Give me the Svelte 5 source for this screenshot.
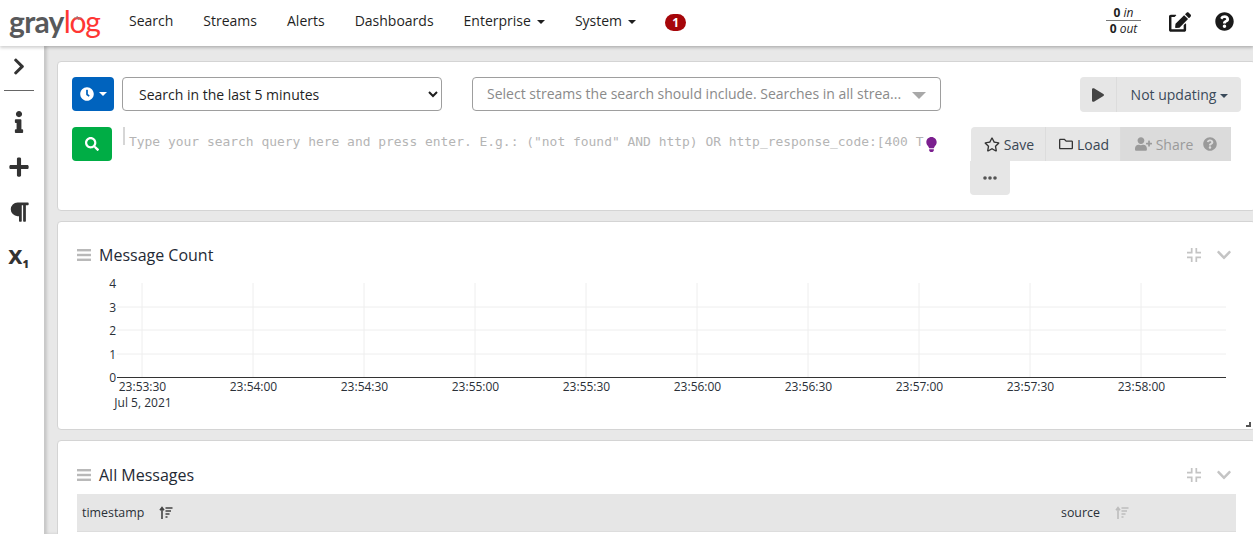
<script>
  const navItems = [
    { label: 'Search' },
    { label: 'Streams' },
    { label: 'Alerts' },
    { label: 'Dashboards' },
    { label: 'Enterprise', caret: true },
    { label: 'System', caret: true },
  ];

  const xTicks = [
    { x: 85, label: '23:53:30' },
    { x: 196, label: '23:54:00' },
    { x: 307, label: '23:54:30' },
    { x: 418, label: '23:55:00' },
    { x: 529, label: '23:55:30' },
    { x: 640, label: '23:56:00' },
    { x: 751, label: '23:56:30' },
    { x: 862, label: '23:57:00' },
    { x: 973, label: '23:57:30' },
    { x: 1084, label: '23:58:00' },
  ];
  const yTicks = [
    { y: 8, label: '4' },
    { y: 32, label: '3' },
    { y: 55, label: '2' },
    { y: 79, label: '1' },
    { y: 102, label: '0' },
  ];

  const placeholder = 'Type your search query here and press enter. E.g.: ("not found" AND http) OR http_response_code:[400 T';
</script>

{#snippet bars()}
  <svg class="bars" viewBox="0 0 14 12" aria-hidden="true">
    <rect x="0" y="0" width="14" height="2.4" />
    <rect x="0" y="4.8" width="14" height="2.4" />
    <rect x="0" y="9.6" width="14" height="2.4" />
  </svg>
{/snippet}

{#snippet widgetTools()}
  <div class="tools">
    <svg class="compress" viewBox="0 0 14 14" aria-hidden="true">
      <path d="M4.7 0v4.7H0M9.3 0v4.7H14M4.7 14V9.3H0M9.3 14V9.3H14" fill="none" stroke="currentColor" stroke-width="1.7" />
    </svg>
    <svg class="collapse" viewBox="0 0 448 512" aria-hidden="true">
      <path d="M207.029 381.476L12.686 187.132c-9.373-9.373-9.373-24.569 0-33.941l22.667-22.667c9.357-9.357 24.522-9.375 33.901-.04L224 284.505l154.745-154.021c9.379-9.335 24.544-9.317 33.901.04l22.667 22.667c9.373 9.373 9.373 24.569 0 33.941L240.971 381.476c-9.373 9.372-24.569 9.372-33.942 0z" />
    </svg>
  </div>
{/snippet}

{#snippet sortIcon(cls)}
  <svg class="sort {cls}" viewBox="0 0 14 14" aria-hidden="true">
    <path d="M3 13V2M1 4.2 3 1.5l2 2.7" fill="none" stroke="currentColor" stroke-width="1.6" />
    <path d="M6.5 2h7M6.5 5h5.5M6.5 8h4M6.5 11h2" fill="none" stroke="currentColor" stroke-width="1.6" />
  </svg>
{/snippet}

<div class="page">
  <nav class="navbar">
    <div class="logo">
      <span class="gray">gray</span><span class="log">l<span class="o">o<svg class="pulse" viewBox="0 0 10 6" aria-hidden="true"><path d="M0 3h3l1-2.5 1.5 5 1-2.5h3" fill="none" stroke="#8a8a8a" stroke-width="0.9" /></svg></span>g</span>
    </div>
    <ul class="nav-links">
      {#each navItems as item}
        <li>{item.label}{#if item.caret}<span class="caret"></span>{/if}</li>
      {/each}
    </ul>
    <span class="badge">1</span>
    <div class="nav-right">
      <div class="throughput">
        <div class="tp-in"><b>0</b> <i>in</i></div>
        <div class="tp-out"><b>0</b> <i>out</i></div>
      </div>
      <svg class="nav-edit" viewBox="0 0 576 512" aria-hidden="true">
        <path d="M402.6 83.2l90.2 90.2c3.8 3.8 3.8 10 0 13.8L274.4 405.6l-92.8 10.3c-12.4 1.4-22.9-9.1-21.5-21.5l10.3-92.8L388.8 83.2c3.8-3.8 10-3.8 13.8 0zm162-22.9l-48.8-48.8c-15.2-15.2-39.9-15.2-55.2 0l-35.4 35.4c-3.8 3.8-3.8 10 0 13.8l90.2 90.2c3.8 3.8 10 3.8 13.8 0l35.4-35.4c15.2-15.3 15.2-40 0-55.2zM384 346.2V448H64V128h73.2c3.2 0 6.2-1.3 8.5-3.5l40-40c7.6-7.6 2.2-20.5-8.5-20.5H48C21.5 64 0 85.5 0 112v352c0 26.5 21.5 48 48 48h352c26.5 0 48-21.5 48-48V306.2c0-10.7-12.9-16-20.5-8.5l-40 40c-2.2 2.3-3.5 5.3-3.5 8.5z" />
      </svg>
      <svg class="nav-help" viewBox="0 0 512 512" aria-hidden="true">
        <path d="M504 256c0 136.997-111.043 248-248 248S8 392.997 8 256C8 119.083 119.043 8 256 8s248 111.083 248 248zM262.655 90c-54.497 0-89.255 22.957-116.549 63.758-3.536 5.286-2.353 12.415 2.715 16.258l34.699 26.31c5.205 3.947 12.621 3.008 16.665-2.122 17.864-22.658 30.113-35.797 57.303-35.797 20.429 0 45.698 13.148 45.698 32.958 0 14.976-12.363 22.667-32.534 33.976C247.128 238.528 216 254.941 216 296v4c0 6.627 5.373 12 12 12h56c6.627 0 12-5.373 12-12v-1.333c0-28.462 83.186-29.647 83.186-106.667 0-58.002-60.165-102-116.531-102zM256 338c-25.365 0-46 20.635-46 46 0 25.364 20.635 46 46 46s46-20.636 46-46c0-25.365-20.635-46-46-46z" />
      </svg>
    </div>
  </nav>

  <div class="body-row">
    <aside class="sidebar">
      <div class="side-item first">
        <svg viewBox="0 0 320 512" class="i-chevron" aria-hidden="true">
          <path d="M285.476 272.971L91.132 467.314c-9.373 9.373-24.569 9.373-33.941 0l-22.667-22.667c-9.357-9.357-9.375-24.522-.04-33.901L188.505 256 34.484 101.255c-9.335-9.379-9.317-24.544.04-33.901l22.667-22.667c9.373-9.373 24.569-9.373 33.941 0L285.475 239.03c9.373 9.372 9.373 24.568.001 33.941z" />
        </svg>
      </div>
      <hr />
      <div class="side-item">
        <svg viewBox="0 0 192 512" class="i-side" aria-hidden="true">
          <path d="M20 424.229h20V279.771H20c-11.046 0-20-8.954-20-20V212c0-11.046 8.954-20 20-20h112c11.046 0 20 8.954 20 20v212.229h20c11.046 0 20 8.954 20 20V492c0 11.046-8.954 20-20 20H20c-11.046 0-20-8.954-20-20v-47.771c0-11.046 8.954-20 20-20zM96 0C56.235 0 24 32.235 24 72s32.235 72 72 72 72-32.235 72-72S135.764 0 96 0z" />
        </svg>
      </div>
      <div class="side-item">
        <svg viewBox="0 0 448 512" class="i-side" aria-hidden="true">
          <path d="M416 208H272V64c0-17.67-14.33-32-32-32h-32c-17.67 0-32 14.33-32 32v144H32c-17.67 0-32 14.33-32 32v32c0 17.67 14.33 32 32 32h144v144c0 17.67 14.33 32 32 32h32c17.67 0 32-14.33 32-32V304h144c17.67 0 32-14.33 32-32v-32c0-17.67-14.33-32-32-32z" />
        </svg>
      </div>
      <div class="side-item">
        <svg viewBox="0 0 448 512" class="i-side" aria-hidden="true">
          <path d="M448 48v32a16 16 0 0 1-16 16h-48v368a16 16 0 0 1-16 16h-32a16 16 0 0 1-16-16V96h-32v368a16 16 0 0 1-16 16h-32a16 16 0 0 1-16-16V352h-32a160 160 0 0 1 0-320h240a16 16 0 0 1 16 16z" />
        </svg>
      </div>
      <div class="side-item subscript">X<span>1</span></div>
    </aside>

    <main class="content">
      <section class="panel search-panel">
        <div class="search-left">
          <div class="row">
            <button class="btn-time">
              <svg viewBox="0 0 512 512" aria-hidden="true">
                <path d="M256,8C119,8,8,119,8,256S119,504,256,504,504,393,504,256,393,8,256,8Zm92.49,313h0l-20,25a16,16,0,0,1-22.49,2.5h0l-67-49.72a40,40,0,0,1-15-31.23V112a16,16,0,0,1,16-16h32a16,16,0,0,1,16,16V256l58,42.5A16,16,0,0,1,348.49,321Z" />
              </svg>
              <span class="caret white"></span>
            </button>
            <select class="time-select">
              <option>Search in the last 5 minutes</option>
            </select>
            <div class="stream-select">
              <span class="stream-text">Select streams the search should include. Searches in all strea...</span>
              <span class="stream-arrow"></span>
            </div>
          </div>
          <div class="row row-query">
            <button class="btn-search">
              <svg viewBox="0 0 512 512" aria-hidden="true">
                <path d="M505 442.7L405.3 343c-4.5-4.5-10.6-7-17-7H372c27.6-35.3 44-79.7 44-128C416 93.1 322.9 0 208 0S0 93.1 0 208s93.1 208 208 208c48.3 0 92.7-16.4 128-44v16.3c0 6.4 2.5 12.5 7 17l99.7 99.7c9.4 9.4 24.6 9.4 33.9 0l28.3-28.3c9.4-9.4 9.4-24.6.1-34zM208 336c-70.7 0-128-57.2-128-128 0-70.7 57.2-128 128-128 70.7 0 128 57.2 128 128 0 70.7-57.2 128-128 128z" />
              </svg>
            </button>
            <div class="editor">
              <span class="gutter"></span>
              <span class="query">{placeholder}</span>
              <svg class="bulb" viewBox="0 0 352 512" aria-hidden="true">
                <path d="M96.06 454.35c.01 6.29 1.87 12.45 5.36 17.69l17.09 25.69a31.99 31.99 0 0 0 26.64 14.28h61.71a31.99 31.99 0 0 0 26.64-14.28l17.09-25.69a31.989 31.989 0 0 0 5.36-17.69l.04-38.35H96.01l.05 38.35zM0 176c0 44.37 16.45 84.85 43.56 115.78 16.52 18.85 42.36 58.23 52.21 91.45.04.26.07.52.11.78h160.24c.04-.26.07-.51.11-.78 9.85-33.22 35.69-72.6 52.21-91.45C335.55 260.85 352 220.37 352 176 352 78.61 272.91-.3 175.45 0 73.44.31 0 82.97 0 176z" />
              </svg>
            </div>
          </div>
        </div>

        <div class="search-right">
          <div class="refresh">
            <button class="btn-play">
              <svg viewBox="0 0 448 512" aria-hidden="true">
                <path d="M424.4 214.7L72.4 6.6C43.8-10.3 0 6.1 0 47.9V464c0 37.5 40.7 60.1 72.4 41.3l352-208c31.4-18.5 31.5-64.1 0-82.6z" />
              </svg>
            </button>
            <button class="btn-interval">Not updating<span class="caret"></span></button>
          </div>
          <div class="actions">
            <div class="action-group">
              <button class="btn-action save">
                <svg viewBox="0 0 576 512" aria-hidden="true">
                  <path d="M528.1 171.5L382 150.2 316.7 17.8c-11.7-23.6-45.6-23.9-57.4 0L194 150.2 47.9 171.5c-26.2 3.8-36.7 36.1-17.7 54.6l105.7 103-25 145.5c-4.5 26.3 23.2 46 46.4 33.7L288 439.6l130.7 68.7c23.2 12.2 50.9-7.4 46.4-33.7l-25-145.5 105.7-103c19-18.5 8.5-50.8-17.7-54.6zM388.6 312.3l23.7 138.4L288 385.4l-124.3 65.3 23.7-138.4-100.6-98 139-20.2 62.2-126 62.2 126 139 20.2-100.6 98z" />
                </svg>
                Save
              </button>
              <button class="btn-action load">
                <svg viewBox="0 0 512 512" aria-hidden="true">
                  <path d="M464 128H272l-54.63-54.63c-6-6-14.14-9.37-22.63-9.37H48C21.49 64 0 85.49 0 112v288c0 26.51 21.49 48 48 48h416c26.51 0 48-21.49 48-48V176c0-26.51-21.49-48-48-48zm0 272H48V112h140.12l54.63 54.63c6 6 14.14 9.37 22.63 9.37H464v224z" />
                </svg>
                Load
              </button>
              <button class="btn-action share">
                <svg class="user" viewBox="0 0 640 512" aria-hidden="true">
                  <path d="M624 208h-64v-64c0-8.8-7.2-16-16-16h-32c-8.8 0-16 7.2-16 16v64h-64c-8.8 0-16 7.2-16 16v32c0 8.8 7.2 16 16 16h64v64c0 8.8 7.2 16 16 16h32c8.8 0 16-7.2 16-16v-64h64c8.8 0 16-7.2 16-16v-32c0-8.8-7.2-16-16-16zm-400 48c70.7 0 128-57.3 128-128S294.7 0 224 0 96 57.3 96 128s57.3 128 128 128zm89.6 32h-16.7c-22.2 10.2-46.9 16-72.9 16s-50.6-5.8-72.9-16h-16.7C60.2 288 0 348.2 0 422.4V464c0 26.5 21.5 48 48 48h352c26.5 0 48-21.5 48-48v-41.6c0-74.2-60.2-134.4-134.4-134.4z" />
                </svg>
                Share
                <svg class="q" viewBox="0 0 512 512" aria-hidden="true">
                  <path d="M504 256c0 136.997-111.043 248-248 248S8 392.997 8 256C8 119.083 119.043 8 256 8s248 111.083 248 248zM262.655 90c-54.497 0-89.255 22.957-116.549 63.758-3.536 5.286-2.353 12.415 2.715 16.258l34.699 26.31c5.205 3.947 12.621 3.008 16.665-2.122 17.864-22.658 30.113-35.797 57.303-35.797 20.429 0 45.698 13.148 45.698 32.958 0 14.976-12.363 22.667-32.534 33.976C247.128 238.528 216 254.941 216 296v4c0 6.627 5.373 12 12 12h56c6.627 0 12-5.373 12-12v-1.333c0-28.462 83.186-29.647 83.186-106.667 0-58.002-60.165-102-116.531-102zM256 338c-25.365 0-46 20.635-46 46 0 25.364 20.635 46 46 46s46-20.636 46-46c0-25.365-20.635-46-46-46z" />
                </svg>
              </button>
            </div>
            <button class="btn-more">
              <svg viewBox="0 0 14 4" aria-hidden="true">
                <circle cx="2" cy="2" r="1.8" /><circle cx="7" cy="2" r="1.8" /><circle cx="12" cy="2" r="1.8" />
              </svg>
            </button>
          </div>
        </div>
      </section>

      <section class="panel widget chart-widget">
        <header class="widget-head">
          {@render bars()}
          <h2>Message Count</h2>
          {@render widgetTools()}
        </header>
        <svg class="chart" width="1199" height="140" viewBox="0 0 1199 140" aria-hidden="true">
          {#each yTicks.slice(1, 4) as t}
            <line x1="60" x2="1169" y1={t.y} y2={t.y} class="grid" />
          {/each}
          {#each xTicks as t}
            <line x1={t.x} x2={t.x} y1="8" y2="102" class="grid" />
            <text x={t.x + 0.5} y="116" text-anchor="middle">{t.label}</text>
          {/each}
          {#each yTicks as t}
            <text x="59" y={t.y + 5} text-anchor="end">{t.label}</text>
          {/each}
          <line x1="60" x2="1169" y1="102.5" y2="102.5" class="axis" />
          <text x="86" y="132" text-anchor="middle">Jul 5, 2021</text>
        </svg>
        <span class="resize"></span>
      </section>

      <section class="panel widget table-widget">
        <header class="widget-head">
          {@render bars()}
          <h2>All Messages</h2>
          {@render widgetTools()}
        </header>
        <div class="table-head">
          <div class="th ts">timestamp {@render sortIcon('dark')}</div>
          <div class="th src">source {@render sortIcon('light')}</div>
        </div>
      </section>
    </main>
  </div>
</div>

<style>
  :global(body) {
    margin: 0;
    overflow: hidden;
    background: #fff;
  }
  .page {
    width: 1253px;
    height: 534px;
    overflow: hidden;
    font-family: 'Open Sans', sans-serif;
    font-size: 14px;
    color: #1f1f1f;
    display: flex;
    flex-direction: column;
  }
  button {
    font-family: inherit;
    font-size: 14px;
    border: 0;
    margin: 0;
    cursor: pointer;
  }

  /* top bar */
  .navbar {
    height: 46px;
    flex: none;
    display: flex;
    align-items: center;
    position: relative;
    z-index: 2;
    background: #fff;
    box-shadow: 0 2px 3px rgba(0, 0, 0, 0.18);
  }
  .logo {
    width: 114px;
    padding-left: 9px;
    box-sizing: border-box;
    font-family: Lato, sans-serif;
    font-size: 30px;
    letter-spacing: -0.7px;
    line-height: 30px;
    margin-top: -5px;
    white-space: nowrap;
  }
  .gray {
    color: #58595b;
    font-weight: 700;
  }
  .log {
    color: #ff3633;
    font-weight: 400;
    letter-spacing: -1.3px;
  }
  .o {
    position: relative;
  }
  .pulse {
    position: absolute;
    left: 5px;
    top: 12px;
    width: 8px;
    height: 6px;
  }
  .nav-links {
    display: flex;
    list-style: none;
    margin: 0;
    padding: 0;
  }
  .nav-links li {
    padding: 0 15px;
    line-height: 20px;
    margin-top: -5px;
  }
  .caret {
    display: inline-block;
    margin-left: 6px;
    vertical-align: middle;
    border-top: 4px solid currentColor;
    border-left: 4px solid transparent;
    border-right: 4px solid transparent;
  }
  .caret.white {
    color: #fff;
    margin-left: 5px;
  }
  .badge {
    margin-left: 14px;
    width: 21px;
    height: 17px;
    border-radius: 9px;
    background: #a6060a;
    color: #fff;
    font-size: 12px;
    font-weight: 700;
    line-height: 17px;
    text-align: center;
    margin-top: -2px;
  }
  .nav-right {
    margin-left: auto;
    display: flex;
    align-items: center;
    padding-right: 19px;
  }
  .throughput {
    width: 35px;
    font-size: 12px;
    line-height: 15px;
    text-align: center;
    margin-right: 28px;
    margin-top: -5px;
  }
  .tp-in {
    border-bottom: 1px solid #777;
  }
  .nav-edit {
    width: 22px;
    height: 20px;
    margin-right: 24px;
    margin-top: -3px;
  }
  .nav-help {
    width: 19px;
    height: 19px;
    margin-top: -3px;
  }
  .nav-edit path,
  .nav-help path {
    fill: #1a1a1a;
  }

  /* left rail */
  .body-row {
    flex: 1;
    display: flex;
    min-height: 0;
  }
  .sidebar {
    width: 44px;
    flex: none;
    padding-top: 9px;
    box-sizing: border-box;
  }
  .sidebar hr {
    width: 30px;
    margin: 13px 0 8px 4px;
    border: 0;
    border-top: 1px solid #666;
  }
  .side-item {
    width: 37px;
    height: 45px;
    display: flex;
    align-items: center;
    justify-content: center;
    color: #333;
  }
  .side-item.first {
    height: 22px;
  }
  .side-item svg {
    fill: #333;
  }
  .i-chevron {
    width: 12px;
    height: 19px;
  }
  .i-side {
    height: 22px;
    width: 20px;
  }
  .subscript {
    font-family: 'DejaVu Sans', sans-serif;
    font-size: 19px;
    font-weight: 700;
    line-height: 20px;
    padding-right: 1px;
  }
  .subscript span {
    font-family: 'Open Sans', sans-serif;
    font-size: 11px;
    font-weight: 800;
    line-height: 10px;
    align-self: flex-end;
    margin-bottom: 10px;
  }

  /* content column */
  .content {
    flex: 1;
    min-width: 0;
    padding: 15px 0 0 13px;
    background: #e8e8e8;
    box-shadow: inset 3px 0 3px rgba(0, 0, 0, 0.14);
    display: flex;
    flex-direction: column;
    gap: 10px;
  }
  .panel {
    width: 1199px;
    flex: none;
    box-sizing: border-box;
    background: #fff;
    border: 1px solid #d4d4d4;
    border-radius: 4px;
    position: relative;
  }

  /* search box */
  .search-panel {
    height: 150px;
    padding: 15px 14px 0 14px;
    display: flex;
    justify-content: space-between;
  }
  .row {
    display: flex;
    align-items: flex-start;
  }
  .row-query {
    margin-top: 16px;
  }
  .btn-time {
    width: 42px;
    height: 34px;
    background: #0063be;
    border-radius: 4px;
    margin-right: 8px;
    display: flex;
    align-items: center;
    justify-content: center;
    padding: 0;
  }
  .btn-time svg {
    width: 14px;
    height: 14px;
    fill: #fff;
  }
  .time-select {
    width: 320px;
    height: 34px;
    margin: 0 30px 0 0;
    padding: 0 12px;
    background: #fff;
    border: 1px solid #9e9e9e;
    border-radius: 4px;
    font-family: inherit;
    font-size: 14px;
    color: #1f1f1f;
  }
  .stream-select {
    width: 469px;
    height: 34px;
    box-sizing: border-box;
    border: 1px solid #9e9e9e;
    border-radius: 4px;
    display: flex;
    align-items: center;
    justify-content: space-between;
    padding: 0 14px;
    color: #8a8a8a;
  }
  .stream-text {
    margin-top: -2px;
    white-space: nowrap;
  }
  .stream-arrow {
    border-top: 7px solid #a8a8a8;
    border-left: 7px solid transparent;
    border-right: 7px solid transparent;
    margin-top: 2px;
  }
  .btn-search {
    width: 40px;
    height: 34px;
    background: #00ad45;
    border-radius: 4px;
    margin-right: 10px;
    padding: 0;
  }
  .btn-search svg {
    width: 14px;
    height: 14px;
    fill: #fff;
    display: block;
    margin: 0 auto;
  }
  .editor {
    display: flex;
    width: 816px;
    height: 34px;
    align-items: flex-start;
    position: relative;
  }
  .gutter {
    width: 2px;
    height: 18px;
    background: #d6d6d6;
    margin-left: 1px;
    flex: none;
  }
  .query {
    font-family: 'DejaVu Sans Mono', monospace;
    font-size: 12.95px;
    line-height: 30px;
    color: #b5b5b5;
    margin-left: 4px;
    white-space: pre;
  }
  .bulb {
    position: absolute;
    left: 804px;
    top: 10px;
    width: 11px;
    height: 15px;
    fill: #7b1f8f;
  }

  .search-right {
    width: 270px;
    display: flex;
    flex-direction: column;
    align-items: flex-end;
  }
  .refresh {
    display: flex;
    height: 35px;
  }
  .btn-play {
    width: 37px;
    background: #e6e6e6;
    border-radius: 4px 0 0 4px;
    border-right: 1px solid #dcdcdc;
    padding: 0;
  }
  .btn-play svg {
    width: 12px;
    height: 14px;
    fill: #444;
    display: block;
    margin: 0 auto;
  }
  .btn-interval {
    width: 124px;
    background: #e6e6e6;
    border-radius: 0 4px 4px 0;
    color: #3a4a5a;
    padding: 0 0 0 1px;
  }
  .btn-interval .caret {
    margin-left: 4px;
  }
  .actions {
    align-self: flex-start;
    margin-top: 15px;
  }
  .action-group {
    display: flex;
    height: 34px;
  }
  .btn-action {
    height: 34px;
    background: #e6e6e6;
    color: #3a4654;
    border-right: 1px solid #dcdcdc;
    padding: 0 0 0 2px;
    display: flex;
    align-items: center;
    justify-content: center;
    gap: 4px;
  }
  .save {
    width: 75px;
    border-radius: 4px 0 0 0;
  }
  .load {
    width: 75px;
  }
  .share {
    width: 110px;
    background: #dbdbdb;
    color: #9a9a9a;
    border-right: 0;
    padding: 0;
  }
  .save svg {
    width: 16px;
    height: 15px;
    fill: #333;
  }
  .load svg {
    width: 14px;
    height: 14px;
    fill: #333;
  }
  .share svg {
    fill: #9a9a9a;
  }
  .share .user {
    width: 17px;
    height: 14px;
  }
  .share .q {
    width: 14px;
    height: 14px;
    margin-left: 6px;
  }
  .btn-more {
    display: block;
    width: 40px;
    height: 34px;
    background: #e6e6e6;
    border-radius: 0 0 4px 4px;
    margin-left: -1px;
    padding: 0;
  }
  .btn-more svg {
    display: block;
    width: 14px;
    height: 4px;
    margin: 0 auto;
    fill: #555;
  }

  /* widgets */
  .widget {
    padding: 0 19px;
  }
  .chart-widget {
    height: 209px;
  }
  .table-widget {
    height: 110px;
  }
  .widget-head {
    display: flex;
    align-items: center;
    height: 24px;
    margin-top: 21px;
  }
  .table-widget .widget-head {
    margin-top: 22px;
  }
  .bars {
    width: 14px;
    height: 12px;
    fill: #b9b9b9;
    margin-right: 8px;
  }
  h2 {
    margin: 0;
    font-size: 16px;
    font-weight: 400;
    line-height: 24px;
    color: #1f2a35;
  }
  .tools {
    margin-left: auto;
    display: flex;
    align-items: center;
    color: #c4c4c4;
    margin-right: 5px;
  }
  .compress {
    width: 14px;
    height: 14px;
    margin-right: 16px;
  }
  .collapse {
    width: 14px;
    height: 16px;
    fill: #c4c4c4;
  }
  .chart {
    display: block;
    margin: 8px 0 0 -20px;
  }
  .chart text {
    font-family: 'Open Sans', sans-serif;
    font-size: 12px;
    fill: #2a3038;
  }
  .grid {
    stroke: #eeeeee;
    stroke-width: 1;
  }
  .axis {
    stroke: #333;
    stroke-width: 1;
  }
  .resize {
    position: absolute;
    right: 4px;
    bottom: 2px;
    width: 3px;
    height: 3px;
    border-right: 2px solid #555;
    border-bottom: 2px solid #555;
  }
  .table-head {
    width: 1159px;
    height: 38px;
    margin-top: 7px;
    background: #e6e6e6;
    border-bottom: 1px solid #ddd;
    box-sizing: border-box;
    display: flex;
    align-items: center;
    font-size: 12.4px;
  }
  .th {
    display: flex;
    align-items: center;
    color: #2a3038;
    gap: 15px;
  }
  .ts {
    width: 984px;
    padding-left: 5px;
    box-sizing: border-box;
  }
  .sort {
    width: 14px;
    height: 14px;
  }
  .sort.dark {
    color: #444;
  }
  .sort.light {
    color: #bdbdbd;
  }
</style>
